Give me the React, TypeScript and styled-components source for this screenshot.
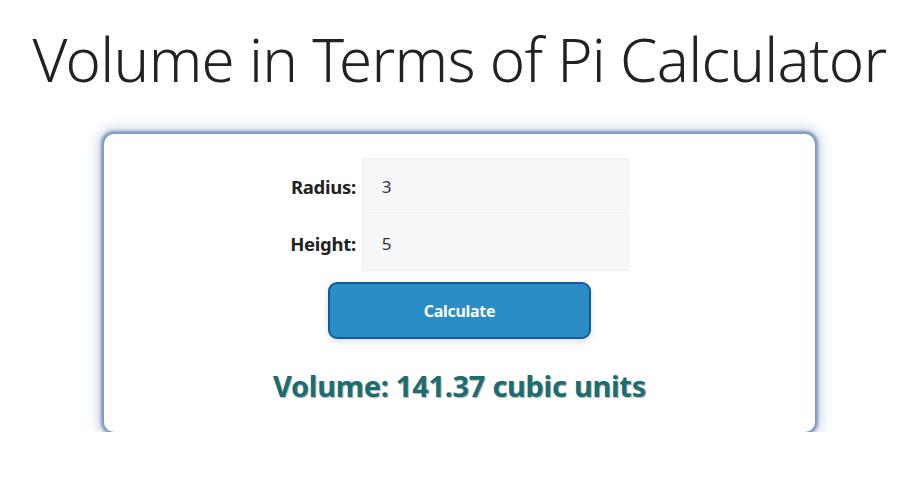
import React, { useState } from 'react'
import styled, { createGlobalStyle } from 'styled-components'

const GlobalStyle = createGlobalStyle`
  html, body {
    margin: 0;
    padding: 0;
    background: #ffffff;
    font-family: 'Noto Sans', 'Open Sans', sans-serif;
    color: #222222;
  }
`

const Page = styled.div`
  display: flex;
  flex-direction: column;
  align-items: center;
  padding-top: 19px;
`

const Title = styled.h1`
  margin: 0 0 35px;
  font-size: 60px;
  font-weight: 300;
  line-height: 80px;
  letter-spacing: -0.7px;
  color: #222222;
  text-align: center;
`

const Card = styled.div`
  box-sizing: border-box;
  width: 711px;
  height: 298px;
  padding: 24px 0 0;
  background: #ffffff;
  border-radius: 10px;
  box-shadow: 0 0 3px 3px rgba(110, 138, 176, 0.85), 0 0 12px 6px rgba(125, 152, 190, 0.4);
  display: flex;
  flex-direction: column;
  align-items: center;
`

const Form = styled.div`
  display: grid;
  grid-template-columns: auto 267px;
  column-gap: 6px;
  row-gap: 1px;
  align-items: center;
`

const Label = styled.label`
  font-size: 18.5px;
  font-weight: 700;
  letter-spacing: -0.3px;
  color: #222222;
  text-align: right;
`

const Input = styled.input`
  box-sizing: border-box;
  width: 267px;
  height: 56px;
  padding: 0 0 0 19px;
  border: 1px solid #eef0f2;
  background: #f6f7f9;
  font-family: 'Noto Sans', 'Open Sans', sans-serif;
  font-size: 17px;
  color: #333333;
  outline: none;
`

const Button = styled.button`
  box-sizing: border-box;
  margin-top: 11px;
  width: 263px;
  height: 57px;
  background: #2a8dc6;
  border: 2px solid #0f5aa6;
  border-radius: 9px;
  color: #ffffff;
  font-family: 'Noto Sans', 'Open Sans', sans-serif;
  font-size: 16px;
  font-weight: 700;
  letter-spacing: -0.3px;
  box-shadow: 0 3px 6px rgba(0, 0, 0, 0.12);
  cursor: pointer;
`

const Result = styled.div`
  margin-top: 27px;
  font-size: 29px;
  font-weight: 700;
  color: #1b6d70;
  letter-spacing: -0.3px;
  text-shadow: 1px 1px 1px rgba(0, 0, 0, 0.3);
`

export default function App() {
  const [radius, setRadius] = useState('3')
  const [height, setHeight] = useState('5')
  const [volume, setVolume] = useState((Math.PI * 9 * 5).toFixed(2))

  const calc = () => {
    const r = parseFloat(radius)
    const h = parseFloat(height)
    if (!isNaN(r) && !isNaN(h)) setVolume((Math.PI * r * r * h).toFixed(2))
  }

  return (
    <Page>
      <GlobalStyle />
      <Title>Volume in Terms of Pi Calculator</Title>
      <Card>
        <Form>
          <Label htmlFor="radius">Radius:</Label>
          <Input id="radius" value={radius} onChange={(e) => setRadius(e.target.value)} />
          <Label htmlFor="height">Height:</Label>
          <Input id="height" value={height} onChange={(e) => setHeight(e.target.value)} />
        </Form>
        <Button onClick={calc}>Calculate</Button>
        <Result>Volume: {volume} cubic units</Result>
      </Card>
    </Page>
  )
}
